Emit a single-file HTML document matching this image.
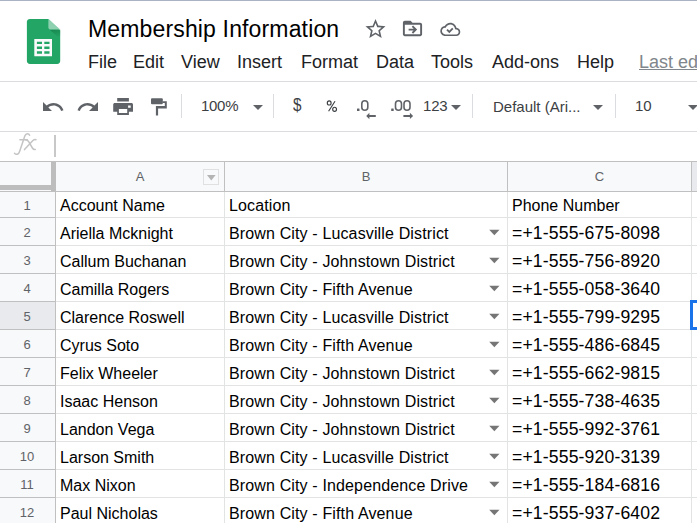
<!DOCTYPE html>
<html><head><meta charset="utf-8">
<style>
*{margin:0;padding:0;box-sizing:border-box}
html,body{width:697px;height:523px;overflow:hidden;background:#fff;font-family:"Liberation Sans",sans-serif;color:#202124}
.a{position:absolute;white-space:nowrap}
.hl{position:absolute;height:1px}
.vl{position:absolute;width:1px}
.menu{position:absolute;white-space:nowrap;top:51px;font-size:18px;color:#202124;line-height:22px}
.cell{position:absolute;font-size:16px;color:#000;line-height:18px;white-space:nowrap}
.ph{font-size:17.6px;letter-spacing:0.15px}
.rn{position:absolute;left:0;width:55px;text-align:center;font-size:13px;color:#5f6368;line-height:15px}
.dd{position:absolute;width:0;height:0;border-left:5px solid transparent;border-right:5px solid transparent;border-top:5px solid #757575}
</style></head>
<body>
<!-- top line -->
<div class="hl" style="left:0;top:0;width:697px;background:#aab3c1"></div>

<!-- logo -->
<svg class="a" style="left:0;top:0" width="70" height="70" viewBox="0 0 70 70">
<defs><linearGradient id="sh" x1="0" y1="0" x2="0.3" y2="1"><stop offset="0" stop-color="#137a45" stop-opacity="0.75"/><stop offset="1" stop-color="#137a45" stop-opacity="0"/></linearGradient></defs>
<path d="M29.8 18.9H48.4L60.2 30.5V61C60.2 62.6 58.9 63.9 57.3 63.9H29.8C28.2 63.9 26.9 62.6 26.9 61V21.8C26.9 20.2 28.2 18.9 29.8 18.9z" fill="#23a566"/>
<path d="M49.5 29.6L60.2 29.6L60.2 39z" fill="url(#sh)"/>
<path d="M48.4 18.9L60.2 29.6H50.6C49.4 29.6 48.4 28.6 48.4 27.4z" fill="#8ed1b1"/>
<path fill="#fafafa" fill-rule="evenodd" d="M34.3 39.1H52V56.3H34.3z M36.9 41.7H42V44.1H36.9z M44.3 41.7H49.5V44.1H44.3z M36.9 46.5H42V48.9H36.9z M44.3 46.5H49.5V48.9H44.3z M36.9 51.3H42V53.7H36.9z M44.3 51.3H49.5V53.7H44.3z"/>
</svg>

<!-- title -->
<div class="a" style="left:88px;top:16px;font-size:23px;line-height:27px;color:#000;letter-spacing:0.15px">Membership Information</div>

<!-- star / folder / cloud -->
<svg class="a" style="left:363px;top:17px;transform:translateX(0.5px)" width="24" height="24" viewBox="0 0 24 24"><path fill="#5f6368" d="M22 9.24l-7.19-.62L12 2 9.19 8.63 2 9.24l5.46 4.73L5.82 21 12 17.27 18.18 21l-1.63-7.03L22 9.24zM12 15.4l-3.76 2.27 1-4.28-3.32-2.88 4.38-.38L12 6.1l1.71 4.04 4.38.38-3.32 2.88 1 4.28L12 15.4z"/></svg>
<svg class="a" style="left:401px;top:17px" width="23" height="23" viewBox="0 0 24 24"><path fill="#5f6368" fill-rule="evenodd" d="M20 6h-8l-2-2H4c-1.1 0-2 .9-2 2v12c0 1.1.9 2 2 2h16c1.1 0 2-.9 2-2V8c0-1.1-.9-2-2-2zm0 12H4V8h16v10z"/></svg><svg class="a" style="left:400px;top:20px" width="24" height="18" viewBox="400 20 24 18"><path fill="none" stroke="#5f6368" stroke-width="1.9" d="M408.6 29.6H415.2M412.4 26.2L415.8 29.6L412.4 33"/></svg>
<svg class="a" style="left:435px;top:15px" width="30" height="27" viewBox="435 15 30 27"><path transform="translate(440.3 19.4) scale(0.8333)" fill="#5f6368" d="M19.35 10.04C18.67 6.59 15.64 4 12 4 9.11 4 6.6 5.64 5.35 8.04 2.34 8.36 0 10.91 0 14c0 3.310 2.69 6 6 6h13c2.76 0 5-2.240 5-5 0-2.64-2.05-4.78-4.65-4.96zM19 18H6c-2.21 0-4-1.79-4-4 0-2.05 1.53-3.76 3.56-3.97l1.07-.11.5-.95C8.080 7.14 9.94 6 12 6c2.62 0 4.88 1.86 5.39 4.43l.3 1.5 1.53.11c1.56.1 2.78 1.41 2.78 2.96 0 1.65-1.35 3-3 3z"/><path fill="none" stroke="#5f6368" stroke-width="1.8" d="M447 29.6L449.3 31.9L452.8 28.4"/></svg>

<!-- menu -->
<div class="menu" style="left:88px">File</div>
<div class="menu" style="left:133px">Edit</div>
<div class="menu" style="left:181px">View</div>
<div class="menu" style="left:237px">Insert</div>
<div class="menu" style="left:301px">Format</div>
<div class="menu" style="left:376px">Data</div>
<div class="menu" style="left:431px">Tools</div>
<div class="menu" style="left:492px">Add-ons</div>
<div class="menu" style="left:577px">Help</div>
<div class="menu" style="left:639px;color:#80868b;text-decoration:underline">Last edit was seconds ago</div>

<div class="hl" style="left:0;top:81px;width:697px;background:#dadce0"></div>

<!-- toolbar icons -->
<svg class="a" style="left:41px;top:95px" width="24" height="24" viewBox="0 0 24 24"><path fill="#5f6368" d="M12.5 8c-2.65 0-5.05.99-6.9 2.6L2 7v9h9l-3.62-3.62c1.39-1.16 3.16-1.88 5.12-1.88 3.54 0 6.55 2.31 7.6 5.5l2.37-.78C21.08 11.03 17.15 8 12.5 8z"/></svg>
<svg class="a" style="left:76px;top:95px" width="24" height="24" viewBox="0 0 24 24"><path fill="#5f6368" d="M18.4 10.6C16.55 8.99 14.15 8 11.5 8c-4.65 0-8.58 3.03-9.96 7.22L3.9 16c1.05-3.19 4.05-5.5 7.6-5.5 1.95 0 3.73.72 5.12 1.88L13 16h9V7l-3.6 3.6z"/></svg>
<svg class="a" style="left:100px;top:90px" width="40" height="30" viewBox="100 90 40 30"><path fill="#5f6368" d="M117.2 98H128.9V101.5H117.2z"/><path fill="#5f6368" fill-rule="evenodd" d="M113.2 111.8V104.5C113.2 103.6 114 102.9 114.8 102.9H131.4C132.3 102.9 133 103.6 133 104.5V111.8H128.9V115H117.2V111.8Z M118.9 108.9V112.9H127.2V108.9Z M128.1 105.5V107.8H130.7V105.5Z"/></svg>
<svg class="a" style="left:145px;top:90px" width="30" height="30" viewBox="145 90 30 30"><rect x="151" y="98.3" width="11.8" height="6" rx="1" fill="#5f6368"/><path fill="#5f6368" d="M162.5 101.2H166.8V108.4H158.1V115.5H155.9V106H164.8V102.9H162.5Z"/></svg>
<div class="vl" style="left:181px;top:94px;height:24px;background:#dadce0"></div>
<div class="a" style="left:201px;top:97px;font-size:15px;line-height:18px;color:#3c4043;letter-spacing:-0.3px">100%</div>
<div class="dd" style="left:253px;top:105px;border-top-color:#5f6368"></div>
<div class="vl" style="left:273px;top:94px;height:24px;background:#dadce0"></div>
<div class="a" style="left:293px;top:94px;font-size:16px;line-height:20px;color:#3c4043;transform:scale(0.95,1.15);transform-origin:0 3px">$</div>
<svg class="a" style="left:320px;top:95px" width="22" height="22" viewBox="320 95 22 22"><g fill="none" stroke="#3c4043" stroke-width="1.15"><ellipse cx="329.2" cy="102.9" rx="1.9" ry="2.1"/><ellipse cx="334.6" cy="109.3" rx="1.9" ry="2.1"/><path d="M335 101.2L328.6 111.2"/></g></svg>
<svg class="a" style="left:350px;top:95px" width="70" height="28" viewBox="350 95 70 28"><g fill="#5f6368"><rect x="357" y="108.6" width="2.5" height="2.5" rx="0.3"/><rect x="391.2" y="108.6" width="2.5" height="2.5" rx="0.3"/><path d="M366.2 116L369.4 112.8V115H375.8V117H369.4V119.3Z"/><path d="M413.1 115.9L409.9 112.7V114.9H403.4V116.9H409.9V119.1Z"/></g><g fill="none" stroke="#5f6368" stroke-width="1.6"><rect x="361.8" y="100.8" width="6" height="9.5" rx="3"/><rect x="395.5" y="100.8" width="6" height="9.5" rx="3"/><rect x="404" y="100.8" width="6" height="9.5" rx="3"/></g></svg>
<div class="a" style="left:423px;top:97px;font-size:15px;line-height:18px;color:#3c4043;letter-spacing:-0.2px">123</div>
<div class="dd" style="left:451px;top:105px;border-top-color:#5f6368"></div>
<div class="vl" style="left:472px;top:94px;height:24px;background:#dadce0"></div>
<div class="a" style="left:493px;top:98px;font-size:15px;line-height:18px;color:#3c4043">Default (Ari...</div>
<div class="dd" style="left:593px;top:105px;border-top-color:#5f6368"></div>
<div class="vl" style="left:615px;top:94px;height:24px;background:#dadce0"></div>
<div class="a" style="left:635px;top:97px;font-size:15px;line-height:18px;color:#3c4043">10</div>
<div class="dd" style="left:688px;top:105px;border-top-color:#5f6368"></div>

<div class="hl" style="left:0;top:131px;width:697px;background:#dadce0"></div>

<!-- formula bar -->
<svg class="a" style="left:0;top:125px" width="60" height="35" viewBox="0 125 60 35"><g fill="none" stroke="#c4c4c4" stroke-width="1.5" stroke-linecap="round"><path d="M29.6 135.2C28.8 133.3 26 133 24.9 135.8L19.6 151.5C18.7 154.4 16.2 155.2 14.5 153.2"/><path d="M19.9 139.7H27.2"/><path d="M25.6 139.7C27.3 139.6 28 140.4 28.8 141.8L32.4 148C33.1 149.2 33.9 149.7 35.3 149.4"/><path d="M36 139.7C34.8 139.2 33.9 139.6 32.9 140.5L24.5 149.6"/></g></svg>
<div class="a" style="left:54px;top:135px;width:2px;height:22px;background:#c8c8c8"></div>
<div class="hl" style="left:0;top:161px;width:697px;background:#c0c0c0"></div>











<!-- GRID START -->
<div class="a" style="left:0;top:162px;width:697px;height:29px;background:#f8f9fa"></div>
<div class="a" style="left:0;top:192px;width:55px;height:331px;background:#f8f9fa"></div>
<div class="a" style="left:0;top:302px;width:55px;height:27px;background:#e8eaed"></div>
<div class="a" style="left:692px;top:162px;width:5px;height:29px;background:#e8eaed"></div>
<div class="hl" style="left:0;top:217px;width:55px;background:#c0c0c0"></div>
<div class="hl" style="left:56px;top:217px;width:641px;background:#e2e3e3"></div>
<div class="hl" style="left:0;top:245px;width:55px;background:#c0c0c0"></div>
<div class="hl" style="left:56px;top:245px;width:641px;background:#e2e3e3"></div>
<div class="hl" style="left:0;top:273px;width:55px;background:#c0c0c0"></div>
<div class="hl" style="left:56px;top:273px;width:641px;background:#e2e3e3"></div>
<div class="hl" style="left:0;top:301px;width:55px;background:#c0c0c0"></div>
<div class="hl" style="left:56px;top:301px;width:641px;background:#e2e3e3"></div>
<div class="hl" style="left:0;top:329px;width:55px;background:#c0c0c0"></div>
<div class="hl" style="left:56px;top:329px;width:641px;background:#e2e3e3"></div>
<div class="hl" style="left:0;top:357px;width:55px;background:#c0c0c0"></div>
<div class="hl" style="left:56px;top:357px;width:641px;background:#e2e3e3"></div>
<div class="hl" style="left:0;top:385px;width:55px;background:#c0c0c0"></div>
<div class="hl" style="left:56px;top:385px;width:641px;background:#e2e3e3"></div>
<div class="hl" style="left:0;top:413px;width:55px;background:#c0c0c0"></div>
<div class="hl" style="left:56px;top:413px;width:641px;background:#e2e3e3"></div>
<div class="hl" style="left:0;top:441px;width:55px;background:#c0c0c0"></div>
<div class="hl" style="left:56px;top:441px;width:641px;background:#e2e3e3"></div>
<div class="hl" style="left:0;top:469px;width:55px;background:#c0c0c0"></div>
<div class="hl" style="left:56px;top:469px;width:641px;background:#e2e3e3"></div>
<div class="hl" style="left:0;top:497px;width:55px;background:#c0c0c0"></div>
<div class="hl" style="left:56px;top:497px;width:641px;background:#e2e3e3"></div>
<div class="hl" style="left:0;top:525px;width:55px;background:#c0c0c0"></div>
<div class="hl" style="left:56px;top:525px;width:641px;background:#e2e3e3"></div>
<div class="hl" style="left:0;top:191px;width:697px;background:#c0c0c0"></div>
<div class="vl" style="left:55px;top:162px;height:361px;background:#c0c0c0"></div>
<div class="vl" style="left:224px;top:162px;height:29px;background:#c0c0c0"></div>
<div class="vl" style="left:224px;top:192px;height:331px;background:#e2e3e3"></div>
<div class="vl" style="left:507px;top:162px;height:29px;background:#c0c0c0"></div>
<div class="vl" style="left:507px;top:192px;height:331px;background:#e2e3e3"></div>
<div class="vl" style="left:691px;top:162px;height:29px;background:#c0c0c0"></div>
<div class="vl" style="left:691px;top:192px;height:331px;background:#e2e3e3"></div>
<div class="a" style="left:51px;top:162px;width:5px;height:29px;background:#bdbdbd"></div>
<div class="a" style="left:0;top:185px;width:56px;height:5px;background:#bdbdbd"></div>
<div class="a" style="left:56px;width:168px;top:169px;text-align:center;font-size:13px;line-height:15px;color:#5f6368">A</div>
<div class="a" style="left:225px;width:282px;top:169px;text-align:center;font-size:13px;line-height:15px;color:#5f6368">B</div>
<div class="a" style="left:508px;width:183px;top:169px;text-align:center;font-size:13px;line-height:15px;color:#5f6368">C</div>
<div class="a" style="left:203px;top:169px;width:16px;height:16px;border:1px solid #e0e0e0;background:#f8f9fa"></div>
<svg class="a" style="left:200px;top:170px" width="20" height="15" viewBox="200 170 20 15"><path fill="#b4b4b4" d="M207 175H215.6L211.3 180.4Z"/></svg>
<div class="rn" style="top:198px;width:54px">1</div>
<div class="cell" style="left:60px;top:197px">Account Name</div>
<div class="cell" style="left:229px;top:197px;letter-spacing:0.14px">Location</div>
<div class="cell" style="left:512px;top:197px">Phone Number</div>
<div class="rn" style="top:225px;width:54px">2</div>
<div class="cell" style="left:60px;top:225px">Ariella Mcknight</div>
<div class="cell" style="left:229px;top:225px;letter-spacing:0.14px">Brown City - Lucasville District</div>
<div class="cell ph" style="left:512px;top:224px">=+1-555-675-8098</div>
<svg class="a" style="left:485px;top:225px" width="18" height="12" viewBox="485 225 18 12"><path fill="#757575" d="M489.2 229.8H499.5L494.35 235.2Z"/></svg>
<div class="rn" style="top:253px;width:54px">3</div>
<div class="cell" style="left:60px;top:253px">Callum Buchanan</div>
<div class="cell" style="left:229px;top:253px;letter-spacing:0.14px">Brown City - Johnstown District</div>
<div class="cell ph" style="left:512px;top:252px">=+1-555-756-8920</div>
<svg class="a" style="left:485px;top:253px" width="18" height="12" viewBox="485 253 18 12"><path fill="#757575" d="M489.2 257.8H499.5L494.35 263.2Z"/></svg>
<div class="rn" style="top:281px;width:54px">4</div>
<div class="cell" style="left:60px;top:281px">Camilla Rogers</div>
<div class="cell" style="left:229px;top:281px;letter-spacing:0.14px">Brown City - Fifth Avenue</div>
<div class="cell ph" style="left:512px;top:280px">=+1-555-058-3640</div>
<svg class="a" style="left:485px;top:281px" width="18" height="12" viewBox="485 281 18 12"><path fill="#757575" d="M489.2 285.8H499.5L494.35 291.2Z"/></svg>
<div class="rn" style="top:309px;width:54px">5</div>
<div class="cell" style="left:60px;top:309px">Clarence Roswell</div>
<div class="cell" style="left:229px;top:309px;letter-spacing:0.14px">Brown City - Lucasville District</div>
<div class="cell ph" style="left:512px;top:308px">=+1-555-799-9295</div>
<svg class="a" style="left:485px;top:309px" width="18" height="12" viewBox="485 309 18 12"><path fill="#757575" d="M489.2 313.8H499.5L494.35 319.2Z"/></svg>
<div class="rn" style="top:337px;width:54px">6</div>
<div class="cell" style="left:60px;top:337px">Cyrus Soto</div>
<div class="cell" style="left:229px;top:337px;letter-spacing:0.14px">Brown City - Fifth Avenue</div>
<div class="cell ph" style="left:512px;top:336px">=+1-555-486-6845</div>
<svg class="a" style="left:485px;top:337px" width="18" height="12" viewBox="485 337 18 12"><path fill="#757575" d="M489.2 341.8H499.5L494.35 347.2Z"/></svg>
<div class="rn" style="top:365px;width:54px">7</div>
<div class="cell" style="left:60px;top:365px">Felix Wheeler</div>
<div class="cell" style="left:229px;top:365px;letter-spacing:0.14px">Brown City - Johnstown District</div>
<div class="cell ph" style="left:512px;top:364px">=+1-555-662-9815</div>
<svg class="a" style="left:485px;top:365px" width="18" height="12" viewBox="485 365 18 12"><path fill="#757575" d="M489.2 369.8H499.5L494.35 375.2Z"/></svg>
<div class="rn" style="top:393px;width:54px">8</div>
<div class="cell" style="left:60px;top:393px">Isaac Henson</div>
<div class="cell" style="left:229px;top:393px;letter-spacing:0.14px">Brown City - Johnstown District</div>
<div class="cell ph" style="left:512px;top:392px">=+1-555-738-4635</div>
<svg class="a" style="left:485px;top:393px" width="18" height="12" viewBox="485 393 18 12"><path fill="#757575" d="M489.2 397.8H499.5L494.35 403.2Z"/></svg>
<div class="rn" style="top:421px;width:54px">9</div>
<div class="cell" style="left:60px;top:421px">Landon Vega</div>
<div class="cell" style="left:229px;top:421px;letter-spacing:0.14px">Brown City - Johnstown District</div>
<div class="cell ph" style="left:512px;top:420px">=+1-555-992-3761</div>
<svg class="a" style="left:485px;top:421px" width="18" height="12" viewBox="485 421 18 12"><path fill="#757575" d="M489.2 425.8H499.5L494.35 431.2Z"/></svg>
<div class="rn" style="top:449px;width:54px">10</div>
<div class="cell" style="left:60px;top:449px">Larson Smith</div>
<div class="cell" style="left:229px;top:449px;letter-spacing:0.14px">Brown City - Lucasville District</div>
<div class="cell ph" style="left:512px;top:448px">=+1-555-920-3139</div>
<svg class="a" style="left:485px;top:449px" width="18" height="12" viewBox="485 449 18 12"><path fill="#757575" d="M489.2 453.8H499.5L494.35 459.2Z"/></svg>
<div class="rn" style="top:477px;width:54px">11</div>
<div class="cell" style="left:60px;top:477px">Max Nixon</div>
<div class="cell" style="left:229px;top:477px;letter-spacing:0.14px">Brown City - Independence Drive</div>
<div class="cell ph" style="left:512px;top:476px">=+1-555-184-6816</div>
<svg class="a" style="left:485px;top:477px" width="18" height="12" viewBox="485 477 18 12"><path fill="#757575" d="M489.2 481.8H499.5L494.35 487.2Z"/></svg>
<div class="rn" style="top:505px;width:54px">12</div>
<div class="cell" style="left:60px;top:505px">Paul Nicholas</div>
<div class="cell" style="left:229px;top:505px;letter-spacing:0.14px">Brown City - Fifth Avenue</div>
<div class="cell ph" style="left:512px;top:504px">=+1-555-937-6402</div>
<svg class="a" style="left:485px;top:505px" width="18" height="12" viewBox="485 505 18 12"><path fill="#757575" d="M489.2 509.8H499.5L494.35 515.2Z"/></svg>
<div class="a" style="left:690px;top:300px;width:10px;height:30px;border:3px solid #1a73e8"></div>
<!-- GRID END -->

</body></html>
